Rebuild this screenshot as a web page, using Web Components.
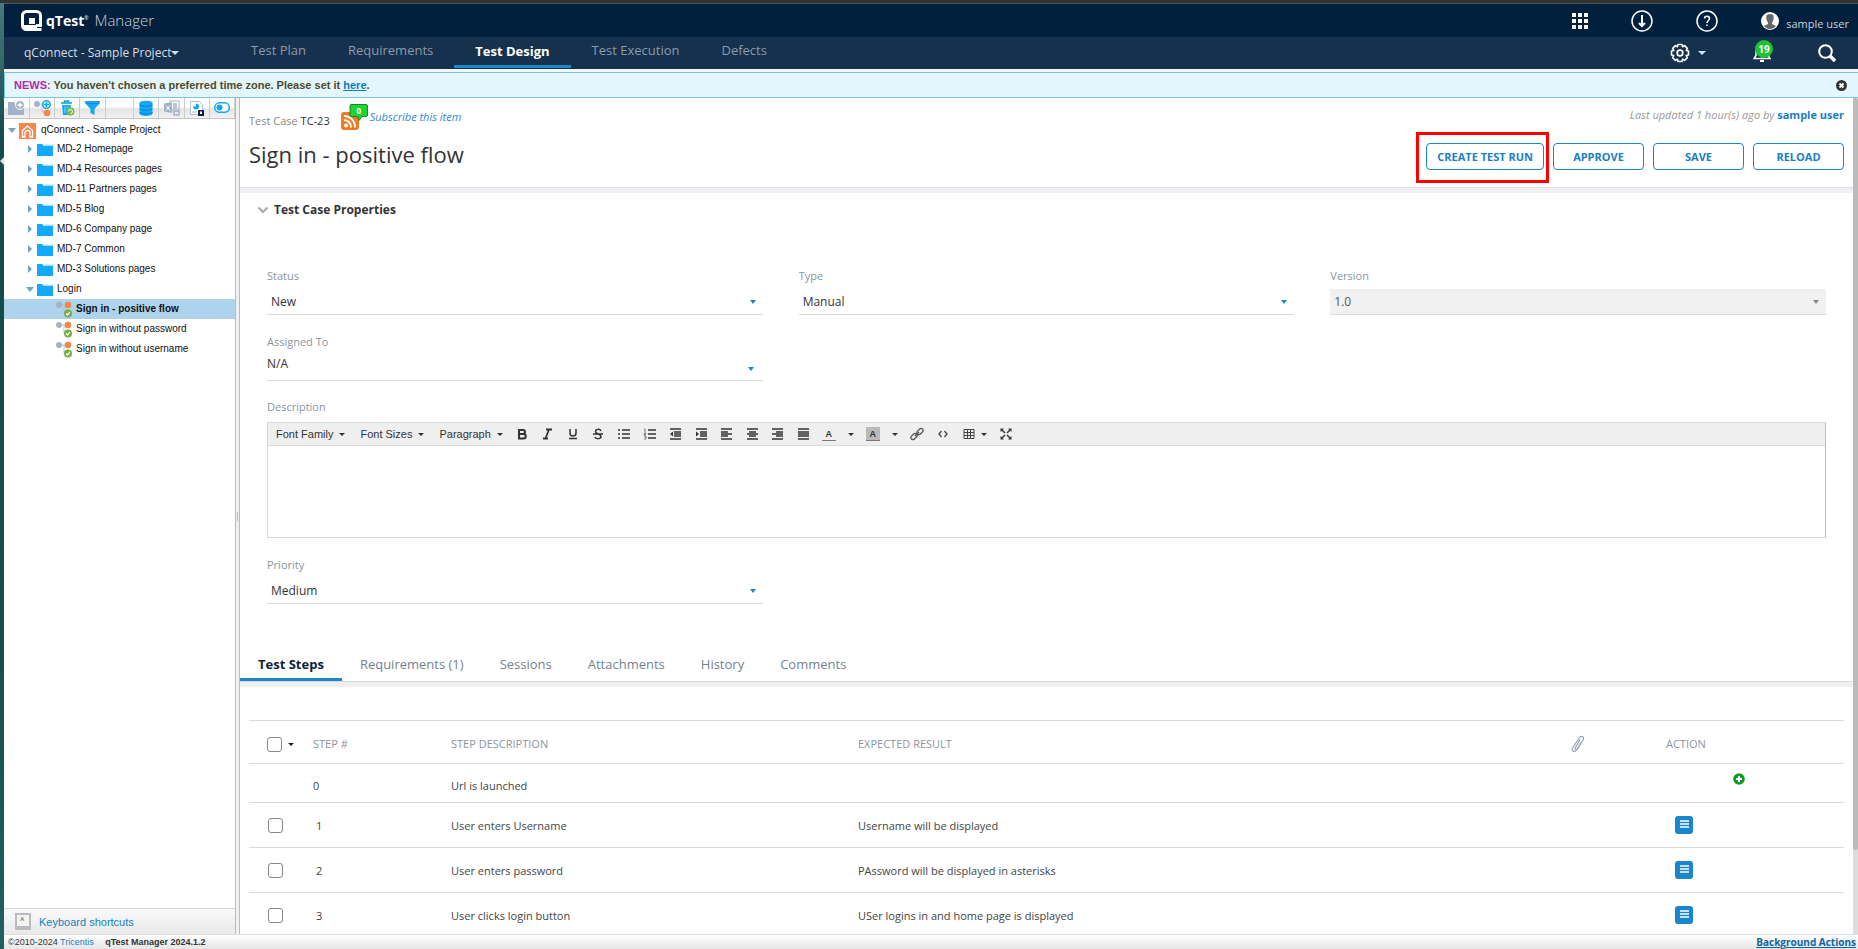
<!DOCTYPE html>
<html lang="en">
<head>
<meta charset="utf-8">
<title>qTest Manager</title>
<style>
  html, body { height: 100%; margin: 0; }
  body { font-family: "Open Sans", "Noto Sans", sans-serif; font-size: 11px; color: #333; background: #fff; overflow: hidden; }
</style>
</head>
<body>
<qt-app></qt-app>

<script>
/**
 * Register an element with an open shadow root.
 */
function define (name, html, setup) {
  const template = document.createElement('template')
  template.innerHTML = html
  customElements.define(name, class extends HTMLElement {
    constructor () {
      super()
      this.attachShadow({ mode: 'open' })
        .appendChild(template.content.cloneNode(true))
    }

    connectedCallback () {
      if (setup) setup(this, this.shadowRoot)
    }
  })
}

// Editor icons share one 14px grid
const lines = (rows) => rows.map(([x, y, w]) => `<path d="M${x} ${y}h${w}" stroke="#333" stroke-width="1.5"/>`).join('')
const icons = {
  bold: '<path d="M4 3h4a2 2 0 0 1 0 4H4zM4 7h4.500a2 2 0 0 1 0 4.500H4z" fill="none" stroke="#333" stroke-width="2"/>',
  italic: '<path d="M6 2.500h6M3 11.500h5M9 2.500l-3.500 9" fill="none" stroke="#333" stroke-width="1.800"/>',
  underline: '<path d="M4 2v4a3 3 0 0 0 6 0V2M3 11.500h8" fill="none" stroke="#333" stroke-width="1.500"/>',
  strike: '<path d="M10 4C9 1.500 4.500 2 4.500 4.500S10 7 10 9.500 5 12.500 4 10M2 7h10" fill="none" stroke="#333" stroke-width="1.500"/>',
  bullets: lines([[5, 3, 8], [5, 7, 8], [5, 11, 8], [1, 3, 2], [1, 7, 2], [1, 11, 2]]),
  numbers: lines([[5, 3, 8], [5, 7, 8], [5, 11, 8]]) + '<path d="M1 2h1v3M1 6h2v1H1v1h2M1 9h2v3H1M2 10.500h1" fill="none" stroke="#666" stroke-width=".8"/>',
  outdent: lines([[2, 2, 11], [6, 5, 7], [6, 7, 7], [6, 9, 7], [2, 12, 11]]) + '<path d="M5 4.500v5L2 7z" fill="#333"/>',
  indent: lines([[2, 2, 11], [6, 5, 7], [6, 7, 7], [6, 9, 7], [2, 12, 11]]) + '<path d="M2 4.500v5L5 7z" fill="#333"/>',
  left: lines([[2, 2, 11], [2, 5, 7], [2, 7, 11], [2, 9, 7], [2, 12, 11]]),
  center: lines([[2, 2, 11], [4, 5, 7], [2, 7, 11], [4, 9, 7], [2, 12, 11]]),
  right: lines([[2, 2, 11], [6, 5, 7], [2, 7, 11], [6, 9, 7], [2, 12, 11]]),
  justify: lines([[2, 2, 11], [2, 5, 11], [2, 7, 11], [2, 9, 11], [2, 12, 11]]),
  link: '<g fill="none" stroke="#555" stroke-width="1.300"><rect x="6.500" y="2.500" width="7" height="4" rx="2" transform="rotate(-45 10 4.500)"/><rect x=".5" y="7.500" width="7" height="4" rx="2" transform="rotate(-45 4 9.500)"/><path d="M5 9l4-4"/></g>',
  code: '<path d="M5.500 4L3 7l2.500 3M8.500 4L11 7l-2.500 3" fill="none" stroke="#444" stroke-width="1.300"/>',
  table: '<path d="M2 2.500h10v9H2zM2 5.500h10M2 8.500h10M5.500 2.500v9M8.500 2.500v9" fill="none" stroke="#444"/>',
  full: '<path d="M1.500 5V1.500H5zM9 1.500h3.500V5zM12.500 9v3.500H9zM5 12.500H1.500V9z" fill="#333"/><path d="M3 3l3 3M11 3L8 6M3 11l3-3M11 11L8 8" stroke="#333" stroke-width="1.500"/>'
}

define('qt-header', `
  <style>
    :host { display: block; color: #fff; }
    .top, .bar { display: flex; align-items: center; }
    .top { height: 34px; background: #00203d; border-top: 1px solid #555; box-sizing: border-box; }
    .bar { height: 32px; background: #16314d; }
    .logo { display: flex; align-items: center; gap: 3px; padding-left: 17px; }
    .brand { font: bold 14px/22px "Open Sans", sans-serif; }
    .brand sup { font-size: 5px; font-weight: normal; line-height: 5px; }
    .product { font: 300 15px/20px "Open Sans", sans-serif; color: #ccd3da; padding: 0 0 2px 3px; }
    .spacer { flex: 1; }
    button { display: block; border: 0; padding: 0; background: none; color: inherit; font: inherit; }
    svg { display: block; }
    .tools { display: flex; align-items: center; gap: 43px; padding-right: 9px; }
    .user { display: flex; gap: 7px; align-items: center; font-size: 11px; color: #ccd3da; }
    .user span { padding-top: 6px; }
    .project { width: 226px; padding-left: 20px; box-sizing: border-box; text-align: left; font-size: 12px; line-height: 28px; color: #d6dde4; }
    .caret { display: inline-block; border: 4px solid transparent; border-top-color: #cfe3f2; border-bottom: 0; vertical-align: 2px; }
    nav { display: flex; height: 31px; align-self: flex-start; }
    nav a { padding: 0 21px; line-height: 26px; font-size: 13px; color: #8c9aa9; text-decoration: none; }
    nav a.active { color: #fff; font-weight: bold; line-height: 28px; border-bottom: 3px solid #1a86cc; }
    .tools.small { gap: 47px; padding-right: 22px; }
    .gear { display: flex; align-items: center; gap: 8px; }
    .bell { position: relative; }
    .bell span { position: absolute; left: 2px; top: -4px; width: 18px; height: 18px; border-radius: 9px; background: #1fc32f; font: bold 10px/18px "Open Sans", sans-serif; text-align: center; }
  </style>
  <div class="top">
    <div class="logo">
      <svg width="22" height="22" viewBox="0 0 22 22" fill="none" stroke="#fff"><path d="M20.500 19.500H5.500a4 4 0 0 1-4-4V5.500a4 4 0 0 1 4-4h10a4 4 0 0 1 4 4V15.500H15" stroke-width="3"/><path d="M3 15h13v3H3z" fill="#fff" stroke="none"/><path d="M7.500 7.500h7v7h-7z" fill="#fff" stroke="#00203d"/></svg>
      <span class="brand">qTest<sup>®</sup></span>
      <span class="product">Manager</span>
    </div>
    <div class="spacer"></div>
    <div class="tools">
      <button aria-label="Apps"><svg width="16" height="16" fill="#fff"><path d="M0 0h4v4H0zM6 0h4v4H6zM12 0h4v4h-4zM0 6h4v4H0zM6 6h4v4H6zM12 6h4v4h-4zM0 12h4v4H0zM6 12h4v4H6zM12 12h4v4h-4z"/></svg></button>
      <button aria-label="Downloads"><svg width="22" height="22" fill="none" stroke="#fff"><circle cx="11" cy="11" r="10" stroke-width="1.500"/><path d="M11 5v11M8 13l3 3 3-3" stroke-width="2"/></svg></button>
      <button aria-label="Help"><svg width="22" height="22" fill="none" stroke="#fff" stroke-width="1.500"><circle cx="11" cy="11" r="10"/><path d="M8.500 8.500C8.500 5.500 13.500 5.500 13.500 8.500c0 2-2.500 2-2.500 4.500M11 14.500v1.500"/></svg></button>
      <button class="user"><svg width="18" height="18"><circle cx="9" cy="9" r="9" fill="#fff"/><path d="M9 2c4 0 4 3 3.500 5.500L11 11v1l4 2c-3 4-9 4-12 0l4-2v-1L5.500 7.500C5 5 5 2 9 2z" fill="#666"/></svg><span>sample user</span></button>
    </div>
  </div>
  <div class="bar">
    <button class="project">qConnect - Sample Project<i class="caret"></i></button>
    <nav>
      <a href="#">Test Plan</a><a href="#">Requirements</a><a href="#" class="active">Test Design</a><a href="#">Test Execution</a><a href="#">Defects</a>
    </nav>
    <div class="spacer"></div>
    <div class="tools small">
      <button class="gear" aria-label="Settings"><svg width="20" height="20" viewBox="0 0 20 20" fill="none" stroke="#fff"><path d="M8 1.500h4l.6 2.300 2-1.200 2.800 2.800-1.200 2 2.300.6v4l-2.300.6 1.200 2-2.800 2.800-2-1.200-.6 2.300H8l-.6-2.300-2 1.200-2.800-2.800 1.200-2-2.300-.6V8l2.300-.6-1.200-2 2.800-2.800 2 1.200z" stroke-width="1.600" stroke-linejoin="round"/><circle cx="10" cy="10" r="2.800" stroke-width="1.800"/></svg><i class="caret"></i></button>
      <button class="bell" aria-label="Notifications"><svg width="18" height="18" fill="none" stroke="#fff"><path d="M1 14.500h16l-2-3V7a6 6 0 0 0-12 0v4.500z" stroke-width="1.500"/><path d="M7 17h4" stroke-width="2"/></svg><span>19</span></button>
      <button aria-label="Search"><svg width="18" height="18" fill="none" stroke="#fff"><circle cx="7.500" cy="7.500" r="6.300" stroke-width="2"/><path d="M12 12l5 5" stroke-width="3.500"/></svg></button>
    </div>
  </div>
`)

define('qt-news', `
  <style>
    :host { display: flex; justify-content: space-between; align-items: center; height: 24px; margin-top: 3px; padding: 0 11px 0 9px; background: #e3f6fd; border: 1px solid #7cc4d8; border-width: 1px 0 1px 1px; font: bold 11px "Liberation Sans", sans-serif; color: #4f4a28; }
    b { color: #b32aa9; }
    a { color: #0a7ac4; }
    button { border: 0; padding: 0; background: none; }
    svg { display: block; }
  </style>
  <span><b>NEWS:</b> You haven't chosen a preferred time zone. Please set it <a href="#">here</a>.</span>
  <button aria-label="Close"><svg width="11" height="11"><circle cx="5.500" cy="5.500" r="5.500" fill="#333"/><path d="M3.500 3.500l4 4M7.500 3.500l-4 4" stroke="#fff" stroke-width="1.800"/></svg></button>
`)

define('qt-tree-toolbar', `
  <style>
    :host { display: grid; grid-template-columns: 26px 25px 25px 26px 28px 25px 26px 25px 25px; height: 20px; border-bottom: 1px solid #c4c4c4; background: linear-gradient(#fff 45%, #e4e4e4 55%, #f2f2f2); }
    button, span { border: 0; border-right: 1px solid #ccc; padding: 0; background: none; display: flex; align-items: center; justify-content: center; }
  </style>
  <button aria-label="New module"><svg width="17" height="16"><path d="M0 2h6l2 3h8v10H0z" fill="#a5b1c6"/><circle cx="12" cy="5" r="4.500" fill="#a5b1c6" stroke="#fff"/><path d="M12 2.500v5M9.500 5h5" stroke="#fff" stroke-width="1.500"/></svg></button>
  <button aria-label="New test case"><svg width="17" height="17"><circle cx="3" cy="4" r="3" fill="#a5b1c6"/><path d="M6 4h5M8 4v8h4" stroke="#b9c2d2" fill="none"/><circle cx="13" cy="13" r="3.300" fill="#f78649"/><circle cx="12.500" cy="4.500" r="3.700" fill="#fff" stroke="#13a7f5" stroke-width="1.600"/><path d="M12.500 2v5M10 4.500h5" stroke="#13a7f5" stroke-width="1.600"/></svg></button>
  <button aria-label="Delete"><svg width="15" height="16"><path d="M1 3h11M4.500 2.500V1h4v1.500" stroke="#0c9be8" stroke-width="1.500" fill="none"/><path d="M2 5h9l-1 10H3z" fill="#13a7f5"/><path d="M5 6v7M8 6v7" stroke="#8ad4ff"/><circle cx="10.500" cy="11.500" r="4" fill="#7ab648"/><path d="M8.500 11.500a2 2 0 1 1 2 2" stroke="#fff" fill="none"/></svg></button>
  <button aria-label="Filter"><svg width="15" height="15"><path d="M0 0h15v2L9.500 8v6l-4-2V8L0 2z" fill="#13a7f5"/><path d="M1 2.500h13" stroke="#0a8fd8"/></svg></button>
  <span></span>
  <button aria-label="Data"><svg width="14" height="16"><path d="M.5 3c0-3 13-3 13 0v11c-1 2.500-12 2.500-13 0z" fill="#13a7f5"/><path d="M.5 5c3 1.800 10 1.800 13 0M.5 9c3 1.800 10 1.800 13 0M.5 12.500c3 1.800 10 1.800 13 0" fill="none" stroke="#0883cc"/></svg></button>
  <button aria-label="Export"><svg width="16" height="16" fill="none" stroke="#a5b1c6"><path d="M5 1h10v9H8"/><path d="M0 3.500L8 2v11l-8-1.500z" fill="#a5b1c6" stroke="none"/><path d="M2 5.500l4 5M6 5.500l-4 5" stroke="#fff"/><path d="M9 4h4M9 6h4M9 8h4M10 11h5v4h-5z" stroke-width="1.500"/></svg></button>
  <button aria-label="Report"><svg width="16" height="17"><path d="M1.500 1.500h9l3 3v10h-12z" fill="#fff" stroke="#b5bece"/><path d="M7 3.500v3H4a3 3 0 1 0 3-3z" fill="#13a7f5"/><path d="M3 12h5" stroke="#a5b1c6"/><path d="M9 10h6v6H9z" fill="#14233f"/><path d="M11 11.500h2V14h-2z" fill="#fff"/></svg></button>
  <button aria-label="Toggle"><svg width="16" height="12"><rect x=".8" y=".8" width="14.500" height="9.500" rx="4.700" fill="#fff" stroke="#13a7f5" stroke-width="1.500"/><circle cx="5.500" cy="5.500" r="3" fill="#13a7f5"/></svg></button>
`)

const treeIcons = {
  home: '<svg width="17" height="16"><path d="M0 0h17v16H0z" fill="#f78650"/><path d="M3.500 7.500l5-4.500 5 4.500V14h-2.500v-4a2.500 2.500 0 0 0-5 0v4H3.500z" fill="none" stroke="#fff" stroke-width="1.300"/></svg>',
  folder: '<svg width="16" height="13"><path d="M0 1h5l2 2h9v10H0z" fill="#12a9ff"/><path d="M6 1.500h10V3H7z" fill="#a9ddfb"/></svg>',
  test: '<svg width="16" height="17"><path d="M5 4h5M8 4v8h3" stroke="#b9c2d2" fill="none"/><circle cx="3" cy="4" r="3" fill="#a5b1c6"/><circle cx="12" cy="4" r="3.300" fill="#f78649"/><circle cx="12" cy="12.500" r="4" fill="#72b040"/><path d="M10 12.500l1.500 1.500 2.500-3" stroke="#fff" stroke-width="1.300" fill="none"/></svg>'
}

define('qt-tree-item', `
  <style>
    :host { display: flex; align-items: center; height: 20px; padding-left: 22px; font: 10px "Liberation Sans", sans-serif; color: #111; }
    :host([kind="home"]) { box-sizing: border-box; padding: 3px 0 0 4px; }
    :host([kind="test"]) { padding-left: 41px; }
    :host([selected]) { background: #aed3ec; font-weight: bold; }
    i { width: 11px; display: flex; }
    .closed::before { content: ""; margin-left: 2px; border: 4px solid transparent; border-left-color: #70a4bf; border-right: 0; }
    .open::before { content: ""; border: 4px solid transparent; border-top: 5px solid #70a4bf; border-bottom: 0; }
    .icon { width: 16px; padding-right: 4px; }
    :host([kind="home"]) .icon { padding-right: 6px; }
    .text { padding-bottom: 2px; }
    svg { display: block; }
  </style>
  <i></i><span class="icon"></span><span class="text"><slot></slot></span>
`, (host, root) => {
  root.querySelector('.icon').innerHTML = treeIcons[host.getAttribute('kind')]
  root.querySelector('i').className = host.getAttribute('state') || ''
})

define('qt-sidebar', `
  <style>
    :host { display: flex; flex-direction: column; width: 232px; box-sizing: border-box; border-right: 1px solid #bbb; }
    .tree { flex: 1; }
    footer { display: flex; align-items: center; gap: 8px; height: 25px; padding-left: 11px; border-top: 1px solid #d6d6d6; background: linear-gradient(#fafafa, #e9e9e9); }
    kbd { width: 16px; height: 17px; box-sizing: border-box; border: 2px solid #bbb; border-bottom-width: 4px; background: #f4f4f4; color: #777; font: bold 6px/9px "Liberation Sans", sans-serif; padding-left: 3px; }
    a { font: 11px "Liberation Sans", sans-serif; color: #1580c4; text-decoration: none; }
  </style>
  <qt-tree-toolbar></qt-tree-toolbar>
  <div class="tree">
    <qt-tree-item kind="home" state="open">qConnect - Sample Project</qt-tree-item>
    <qt-tree-item kind="folder" state="closed">MD-2 Homepage</qt-tree-item>
    <qt-tree-item kind="folder" state="closed">MD-4 Resources pages</qt-tree-item>
    <qt-tree-item kind="folder" state="closed">MD-11 Partners pages</qt-tree-item>
    <qt-tree-item kind="folder" state="closed">MD-5 Blog</qt-tree-item>
    <qt-tree-item kind="folder" state="closed">MD-6 Company page</qt-tree-item>
    <qt-tree-item kind="folder" state="closed">MD-7 Common</qt-tree-item>
    <qt-tree-item kind="folder" state="closed">MD-3 Solutions pages</qt-tree-item>
    <qt-tree-item kind="folder" state="open">Login</qt-tree-item>
    <qt-tree-item kind="test" selected>Sign in - positive flow</qt-tree-item>
    <qt-tree-item kind="test">Sign in without password</qt-tree-item>
    <qt-tree-item kind="test">Sign in without username</qt-tree-item>
  </div>
  <footer><kbd>A</kbd><a href="#">Keyboard shortcuts</a></footer>
`)

define('qt-button', `
  <style>
    :host { display: block; position: relative; }
    button { display: block; width: 100%; min-width: 91px; height: 27px; padding: 0 10px; border: 1px solid #1a86cc; border-radius: 4px; background: #fff; color: #1a7fc4; font: bold 11px "Open Sans", sans-serif; }
    :host([marked])::after { content: ""; position: absolute; inset: -11px -5px -13px -10px; border: 3px solid #f00; }
  </style>
  <button><slot></slot></button>
`)

define('qt-title', `
  <style>
    :host { display: flex; justify-content: space-between; height: 89px; padding: 0 9px; border-bottom: 1px solid #d8dee6; box-shadow: 0 5px #f0f0f2; }
    .id { display: flex; height: 38px; padding-top: 6px; box-sizing: border-box; font-size: 11px; color: #888; }
    .id > span { padding: 9px 11px 0 0; line-height: 15px; }
    .id b { color: #333; font-weight: normal; }
    .id a { padding: 5px 0 0 2px; line-height: 15px; color: #2c8bca; font-style: italic; text-decoration: none; }
    .feed { position: relative; width: 27px; height: 27px; }
    .feed b { position: absolute; right: 1px; top: 1px; width: 16px; color: #fff; font: bold 8px/11px "Open Sans", sans-serif; text-align: center; }
    h1 { margin: 0; font-weight: normal; font-size: 22px; line-height: 36px; color: #333; }
    .updated { padding-top: 9px; line-height: 15px; text-align: right; font-style: italic; color: #999; }
    .updated a { color: #1a7fc4; font-weight: bold; font-style: normal; text-decoration: none; }
    .buttons { display: flex; gap: 9px; padding-top: 21px; }
  </style>
  <div>
    <div class="id">
      <span>Test Case <b>TC-23</b></span>
      <div class="feed">
        <svg width="27" height="27"><rect y="8" width="18" height="18" rx="3" fill="#f47a20"/><circle cx="5" cy="21.500" r="2" fill="#fff"/><path d="M3 16a7 7 0 0 1 7 7.500M3 12a11 11 0 0 1 11 11.500" fill="none" stroke="#fff" stroke-width="2"/><path d="M10 .5h15q1.500 0 1.500 1.500v9q0 1.500-1.500 1.500h-4l-3 4-1-4h-7q-1 0-1-1.500V2q0-1.500 1-1.500z" fill="#1fd435" stroke="#17882a"/></svg>
        <b>0</b>
      </div>
      <a href="#">Subscribe this item</a>
    </div>
    <h1>Sign in - positive flow</h1>
  </div>
  <div>
    <div class="updated">Last updated 1 hour(s) ago by <a href="#">sample user</a></div>
    <div class="buttons">
      <qt-button marked>CREATE TEST RUN</qt-button>
      <qt-button>APPROVE</qt-button>
      <qt-button>SAVE</qt-button>
      <qt-button>RELOAD</qt-button>
    </div>
  </div>
`)

define('qt-select', `
  <style>
    :host { display: block; }
    label { display: block; line-height: 15px; color: #8b959f; }
    .box { display: grid; align-items: center; margin-top: 6px; border-bottom: 1px solid #d5dde5; }
    select, .box::after { grid-area: 1 / 1; }
    .box::after { content: ""; justify-self: end; margin-right: 7px; border: 3px solid transparent; border-top: 4px solid #1a86cc; border-bottom: 0; pointer-events: none; }
    select { appearance: none; width: 100%; height: 25px; border: 0; margin: 0; padding: 0 4px; background: #fff; color: #333; font: 12px "Open Sans", sans-serif; opacity: 1; }
    select:disabled { background: #f1f1f1; color: #555; }
    :host([disabled]) .box::after { border-top-color: #888; }
    :host([plain]) .box { margin-top: 0; }
    :host([plain]) select { height: 31px; padding: 0 0 3px; }
    :host([plain]) .box::after { margin: 9px 9px 0 0; }
  </style>
  <label for="field"></label>
  <div class="box"><select id="field"><option></option></select></div>
`, (host, root) => {
  root.querySelector('label').textContent = host.getAttribute('label')
  root.querySelector('option').textContent = host.getAttribute('value')
  root.querySelector('select').disabled = host.hasAttribute('disabled')
})

define('qt-editor', `
  <style>
    :host { display: block; }
    label { display: block; line-height: 15px; color: #8b959f; }
    .box { margin-top: 8px; border: 1px solid #d5dae2; border-right-color: #bbb; }
    .toolbar { display: flex; align-items: center; height: 22px; padding-left: 8px; background: #efefef; border-bottom: 1px solid #d5dce4; }
    button { display: flex; align-items: center; border: 0; padding: 0; background: none; color: #333; font: 11px "Liberation Sans", sans-serif; }
    .menus { display: flex; gap: 15px; margin-right: 6px; }
    .menu { gap: 6px; }
    .caret { border: 3px solid transparent; border-top-color: #333; border-bottom: 0; }
    .icons { display: grid; grid-template-columns: repeat(12, 1fr); width: 307px; }
    .icons button { justify-content: center; }
    .last { display: flex; align-items: center; gap: 12px; padding-left: 6px; }
    .color { width: 14px; height: 14px; justify-content: center; border-bottom: 1px solid #777; font: bold 9px "Liberation Sans", sans-serif; }
    .color.back { background: #b9b9b9; }
    .table { gap: 5px; }
    textarea { display: block; width: 100%; height: 91px; box-sizing: border-box; border: 0; resize: none; }
  </style>
  <label for="text">Description</label>
  <div class="box">
    <div class="toolbar">
      <div class="menus">
        <button class="menu">Font Family <i class="caret"></i></button>
        <button class="menu">Font Sizes <i class="caret"></i></button>
        <button class="menu">Paragraph <i class="caret"></i></button>
      </div>
      <div class="icons"></div>
      <div class="last">
        <button class="color">A</button><button aria-label="Text colors"><i class="caret"></i></button>
        <button class="color back">A</button><button aria-label="Background colors"><i class="caret"></i></button>
        <button aria-label="Link"><svg width="14" height="14">${icons.link}</svg></button>
        <button aria-label="Source"><svg width="14" height="14">${icons.code}</svg></button>
        <button class="table" aria-label="Table"><svg width="14" height="14">${icons.table}</svg><i class="caret"></i></button>
        <button aria-label="Full screen"><svg width="14" height="14">${icons.full}</svg></button>
      </div>
    </div>
    <textarea id="text"></textarea>
  </div>
`, (host, root) => {
  for (const name of ['bold', 'italic', 'underline', 'strike', 'bullets', 'numbers', 'outdent', 'indent', 'left', 'center', 'right', 'justify']) {
    const button = document.createElement('button')
    button.setAttribute('aria-label', name)
    button.innerHTML = `<svg width="14" height="14">${icons[name]}</svg>`
    root.querySelector('.icons').appendChild(button)
  }
})

define('qt-properties', `
  <style>
    :host { display: block; padding: 13px 27px 0; }
    h2 { display: flex; align-items: center; gap: 5px; margin: 0 0 0 -10px; font-size: 12px; line-height: 18px; }
    .row { display: grid; grid-template-columns: repeat(3, 1fr); column-gap: 36px; row-gap: 19px; padding-top: 49px; }
    qt-editor { padding-top: 18px; }
    .row.last { padding-top: 19px; }
  </style>
  <h2><svg width="12" height="8"><path d="M1.500 1.500L6 6l4.500-4.500" fill="none" stroke="#aaa" stroke-width="2.200"/></svg>Test Case Properties</h2>
  <div class="row">
    <qt-select label="Status" value="New"></qt-select>
    <qt-select label="Type" value="Manual"></qt-select>
    <qt-select label="Version" value="1.0" disabled></qt-select>
    <qt-select label="Assigned To" value="N/A" plain></qt-select>
  </div>
  <qt-editor></qt-editor>
  <div class="row last"><qt-select label="Priority" value="Medium"></qt-select></div>
`)

define('qt-tabs', `
  <style>
    :host { display: flex; height: 34px; margin-top: 43px; border-bottom: 1px solid #d5dce4; box-shadow: 0 5px #f0f0f0; }
    a { padding: 0 18px; line-height: 34px; font-size: 13px; color: #75828f; text-decoration: none; }
    a.active { box-sizing: border-box; border-bottom: 3px solid #1a86cc; color: #0b2340; font-weight: bold; }
  </style>
  <a href="#" class="active">Test Steps</a><a href="#">Requirements (1)</a><a href="#">Sessions</a><a href="#">Attachments</a><a href="#">History</a><a href="#">Comments</a>
`)

define('qt-steps', `
  <style>
    :host { display: block; padding: 38px 9px 0; }
    table { width: 100%; table-layout: fixed; border-collapse: collapse; border-top: 1px solid #d5dce6; }
    th, td { padding: 0; text-align: left; font-weight: normal; border-bottom: 1px solid #d5dce6; }
    th { height: 40px; padding-top: 2px; color: #8b94a0; }
    td { height: 44px; color: #444; }
    .first td { height: 34px; padding-top: 4px; }
    .check { width: 64px; }
    .number { width: 138px; }
    .text { width: 407px; }
    .clip { width: 95px; }
    .action { width: 178px; }
    td:nth-child(2) { padding-left: 3px; box-sizing: border-box; }
    .first td:nth-child(2) { padding-left: 0; height: 38px; }
    .check div { display: flex; align-items: center; gap: 6px; padding-top: 2px; }
    input { appearance: none; display: block; width: 15px; height: 15px; margin: 0 0 0 19px; border: 1px solid #888; border-radius: 3px; background: #fff; }
    th input { margin-left: 18px; }
    .caret { border: 3px solid transparent; border-top-color: #222; border-bottom: 0; }
    button { display: block; border: 0; padding: 0; background: none; }
    .menu { width: 18px; height: 18px; margin-left: 9px; border-radius: 3px; background: #1a86cc; }
    .add { margin: 0 0 12px 67px; }
    th button { display: flex; }
    svg { display: block; }
  </style>
  <table>
    <thead>
      <tr>
        <th class="check"><div><input type="checkbox" aria-label="Select all"><button aria-label="Selection"><i class="caret"></i></button></div></th>
        <th class="number">STEP #</th>
        <th class="text">STEP DESCRIPTION</th>
        <th>EXPECTED RESULT</th>
        <th class="clip"><svg width="14" height="17" fill="none" stroke="#9aa3ad"><path d="M9 4.500l-4.500 8c-1 2 1 3 2 1.500l5.500-9c2-3-1.500-5-3.500-2.500l-7 10.500c-1.500 3 2 4.500 3.500 2.500l5-8" stroke-width="1.200"/></svg></th>
        <th class="action">ACTION</th>
      </tr>
    </thead>
    <tbody>
      <tr class="first"><td></td><td>0</td><td>Url is launched</td><td></td><td></td><td><button class="add" aria-label="Add step"><svg width="12" height="12"><circle cx="6" cy="6" r="5.800" fill="#139a22"/><path d="M6 3v6M3 6h6" stroke="#fff" stroke-width="2"/></svg></button></td></tr>
    </tbody>
  </table>
`, (host, root) => {
  const steps = [
    ['User enters Username', 'Username will be displayed'],
    ['User enters password', 'PAssword will be displayed in asterisks'],
    ['User clicks login button', 'USer logins in and home page is displayed']
  ]
  steps.forEach(([description, result], i) => {
    const row = document.createElement('tr')
    row.innerHTML = `<td><input type="checkbox" aria-label="Step ${i + 1}"></td><td>${i + 1}</td><td>${description}</td><td>${result}</td><td></td>
      <td><button class="menu" aria-label="Actions"><svg width="18" height="18"><path d="M5 5h9M5 8h9M5 11h9" stroke="#fff" stroke-width="1.500"/></svg></button></td>`
    root.querySelector('tbody').appendChild(row)
  })
})

define('qt-footer', `
  <style>
    :host { display: flex; justify-content: space-between; align-items: center; height: 14px; padding: 0 2px 0 4px; border-top: 1px solid #ddd; background: linear-gradient(#fff, #e6e6e6); font: 9px/14px "Liberation Sans", sans-serif; }
    a { color: #1580c4; text-decoration: none; }
    b { padding-left: 9px; }
    .jobs { font: bold 10px/14px "Open Sans", sans-serif; color: #0f639e; text-decoration: underline; }
  </style>
  <span>©2010-2024 <a href="#">Tricentis</a> <b>qTest Manager 2024.1.2</b></span>
  <a class="jobs" href="#">Background Actions</a>
`)

define('qt-app', `
  <style>
    :host { display: flex; height: 100vh; box-sizing: border-box; border-top: 3px solid #333; }
    .edge { flex: none; display: flex; align-items: flex-start; width: 4px; background: linear-gradient(#487a80, #124b4b 15%, #184f4e 70%, #1d6360); }
    .edge::before { content: ""; margin-top: 154px; border: 4px solid transparent; border-right-color: #ddd; border-left: 0; }
    .app { flex: 1; min-width: 0; display: flex; flex-direction: column; background: #f4f5f7; }
    .work { flex: 1; min-height: 0; display: flex; background: #fff; }
    .split { display: flex; align-items: center; justify-content: center; width: 4px; box-sizing: border-box; border-right: 1px solid #bbb; background: #f0f0f0; }
    .split::before { content: ""; width: 1px; height: 9px; background: #bbb; }
    main { flex: 1; min-width: 0; overflow: hidden; }
    .scroll { width: 5px; background: #ddd; }
    .scroll div { height: 90%; background: #bbb; border-radius: 2px; }
  </style>
  <div class="edge"></div>
  <div class="app">
    <qt-header></qt-header>
    <qt-news></qt-news>
    <div class="work">
      <qt-sidebar></qt-sidebar>
      <div class="split"></div>
      <main>
        <qt-title></qt-title>
        <qt-properties></qt-properties>
        <qt-tabs></qt-tabs>
        <qt-steps></qt-steps>
      </main>
      <div class="scroll"><div></div></div>
    </div>
    <qt-footer></qt-footer>
  </div>
`)
</script>
</body>
</html>
